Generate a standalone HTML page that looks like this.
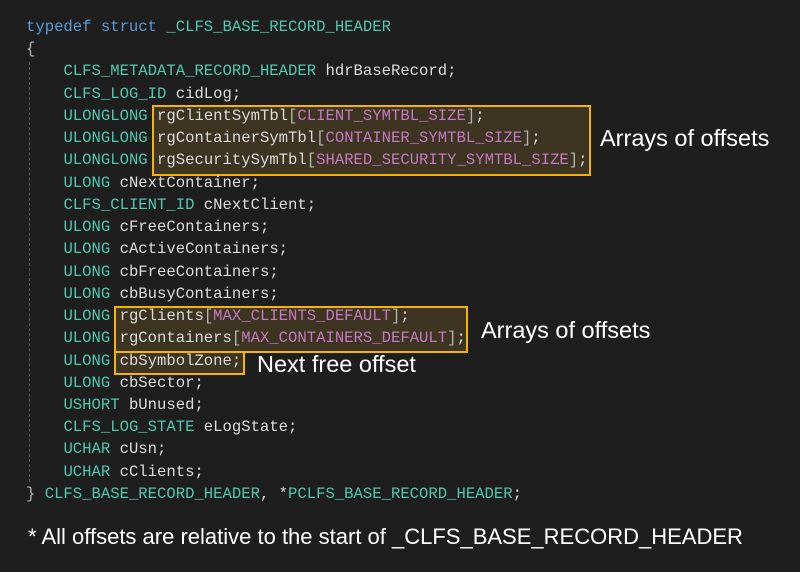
<!DOCTYPE html>
<html><head><style>
body{margin:0;width:800px;height:572px;background:#1e1e1e;overflow:hidden;position:relative;font-family:"Liberation Mono",monospace}
.code{position:absolute;left:26px;top:16px;font-size:15.6px;line-height:22.24px;color:#dcdcdc;white-space:pre}
.k{color:#569cd6}.t{color:#4ec9b0}.m{color:#c27ac0}.p{color:#b4b4b4}
.box{position:absolute;border:2px solid #f5b400;background:rgba(120,95,40,0.35);box-sizing:border-box}
.lbl{position:absolute;color:#fff;font-family:"Liberation Sans",sans-serif;font-size:23.5px;white-space:pre}
.guide{position:absolute;left:29px;top:62px;height:420px;border-left:1px dashed #555}
</style></head><body>
<div class="guide"></div>
<div class="box" style="left:152px;top:105px;width:439px;height:71px"></div>
<div class="box" style="left:114px;top:306px;width:354px;height:47px"></div>
<div class="box" style="left:114px;top:351px;width:131px;height:24px"></div>
<div class="code"><span class="k">typedef struct</span> <span class="t">_CLFS_BASE_RECORD_HEADER</span>
<span class="p">{</span>
    <span class="t">CLFS_METADATA_RECORD_HEADER</span> hdrBaseRecord;
    <span class="t">CLFS_LOG_ID</span> cidLog;
    <span class="t">ULONGLONG</span> rgClientSymTbl<span class="p">[</span><span class="m">CLIENT_SYMTBL_SIZE</span><span class="p">]</span>;
    <span class="t">ULONGLONG</span> rgContainerSymTbl<span class="p">[</span><span class="m">CONTAINER_SYMTBL_SIZE</span><span class="p">]</span>;
    <span class="t">ULONGLONG</span> rgSecuritySymTbl<span class="p">[</span><span class="m">SHARED_SECURITY_SYMTBL_SIZE</span><span class="p">]</span>;
    <span class="t">ULONG</span> cNextContainer;
    <span class="t">CLFS_CLIENT_ID</span> cNextClient;
    <span class="t">ULONG</span> cFreeContainers;
    <span class="t">ULONG</span> cActiveContainers;
    <span class="t">ULONG</span> cbFreeContainers;
    <span class="t">ULONG</span> cbBusyContainers;
    <span class="t">ULONG</span> rgClients<span class="p">[</span><span class="m">MAX_CLIENTS_DEFAULT</span><span class="p">]</span>;
    <span class="t">ULONG</span> rgContainers<span class="p">[</span><span class="m">MAX_CONTAINERS_DEFAULT</span><span class="p">]</span>;
    <span class="t">ULONG</span> cbSymbolZone;
    <span class="t">ULONG</span> cbSector;
    <span class="t">USHORT</span> bUnused;
    <span class="t">CLFS_LOG_STATE</span> eLogState;
    <span class="t">UCHAR</span> cUsn;
    <span class="t">UCHAR</span> cClients;
<span class="p">}</span> <span class="t">CLFS_BASE_RECORD_HEADER</span>, *<span class="t">PCLFS_BASE_RECORD_HEADER</span>;</div>
<div class="lbl" style="left:600px;top:125px">Arrays of offsets</div>
<div class="lbl" style="left:481px;top:317px">Arrays of offsets</div>
<div class="lbl" style="left:257px;top:351px">Next free offset</div>
<div class="lbl" style="left:28px;top:524px;font-size:22px">* All offsets are relative to the start of _CLFS_BASE_RECORD_HEADER</div>
</body></html>
